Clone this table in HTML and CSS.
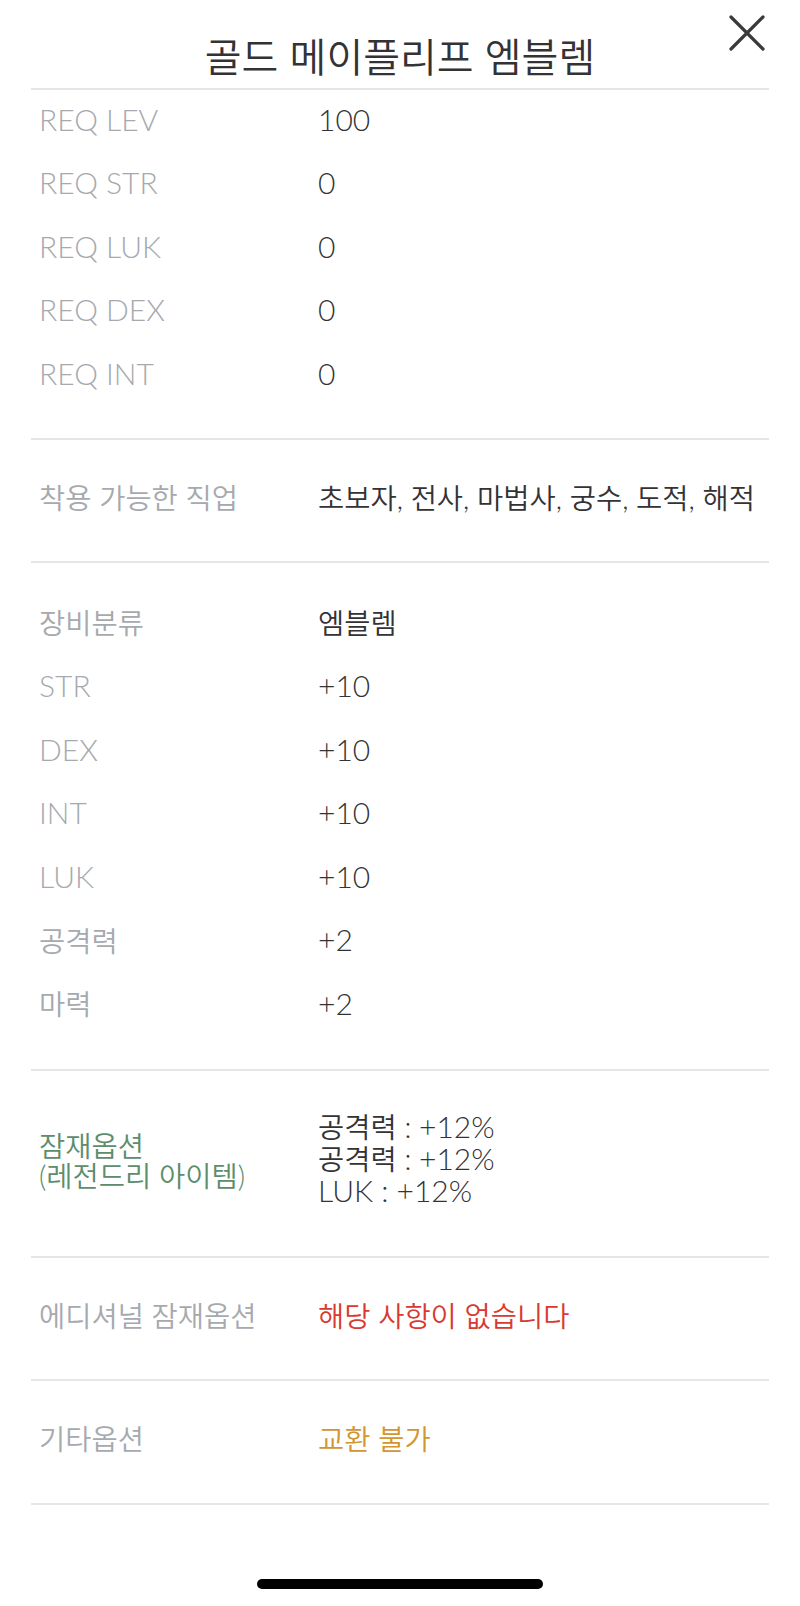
FILE: index.html
```html
<!DOCTYPE html>
<html lang="ko">
<head>
    <meta charset="UTF-8">
    <meta name="viewport" content="width=device-width, initial-scale=1.0">
    <title>골드 메이플리프 엠블렘</title>
    <link rel="stylesheet" href="styles.css">
</head>
<body>
    <div class="sheet">
        <header class="sheet-header">
            <h1 class="title">골드 메이플리프 엠블렘</h1>
            <button class="close-btn" aria-label="닫기">
                <svg width="36" height="36" viewBox="0 0 36 36">
                    <path d="M2 2 L34 34 M34 2 L2 34" stroke="#3a3a3c" stroke-width="3.2" stroke-linecap="round" fill="none"/>
                </svg>
            </button>
        </header>

        <section class="group group-first">
            <div class="row"><span class="label en">REQ LEV</span><span class="value en">100</span></div>
            <div class="row"><span class="label en">REQ STR</span><span class="value en">0</span></div>
            <div class="row"><span class="label en">REQ LUK</span><span class="value en">0</span></div>
            <div class="row"><span class="label en">REQ DEX</span><span class="value en">0</span></div>
            <div class="row"><span class="label en">REQ INT</span><span class="value en">0</span></div>
        </section>

        <section class="group">
            <div class="row"><span class="label">착용 가능한 직업</span><span class="value">초보자, 전사, 마법사, 궁수, 도적, 해적</span></div>
        </section>

        <section class="group group-stats">
            <div class="row"><span class="label">장비분류</span><span class="value">엠블렘</span></div>
            <div class="row"><span class="label en">STR</span><span class="value en">+10</span></div>
            <div class="row"><span class="label en">DEX</span><span class="value en">+10</span></div>
            <div class="row"><span class="label en">INT</span><span class="value en">+10</span></div>
            <div class="row"><span class="label en">LUK</span><span class="value en">+10</span></div>
            <div class="row"><span class="label">공격력</span><span class="value en">+2</span></div>
            <div class="row"><span class="label">마력</span><span class="value en">+2</span></div>
        </section>

        <section class="group group-potential">
            <div class="row row-multi">
                <div class="label legendary">
                    <div>잠재옵션</div>
                    <div>(레전드리 아이템)</div>
                </div>
                <div class="value">
                    <div>공격력 : <span class="en">+12%</span></div>
                    <div>공격력 : <span class="en">+12%</span></div>
                    <div class="en">LUK : +12%</div>
                </div>
            </div>
        </section>

        <section class="group">
            <div class="row"><span class="label">에디셔널 잠재옵션</span><span class="value none">해당 사항이 없습니다</span></div>
        </section>

        <section class="group">
            <div class="row"><span class="label">기타옵션</span><span class="value untradable">교환 불가</span></div>
        </section>

        <div class="home-area">
            <div class="home-bar"></div>
        </div>
    </div>
</body>
</html>
```

FILE: styles.css
```css
body {
    margin: 0;
    background: #fff;
    font-family: "Lato", "Noto Sans CJK KR", sans-serif;
    font-weight: 350;
    color: #3a3a3c;
}
.sheet {
    width: 800px;
    min-height: 1606px;
    box-sizing: border-box;
    padding: 0 31px;
    display: flex;
    flex-direction: column;
}
.sheet-header {
    position: relative;
    height: 90px;
    display: flex;
    justify-content: center;
    padding-top: 33px;
    box-sizing: border-box;
    border-bottom: 2px solid #e6e6e8;
}
.title {
    margin: 0;
    font-family: "Noto Sans CJK KR", sans-serif;
    font-weight: 350;
    font-size: 40px;
    line-height: 44px;
    color: #333336;
}
.close-btn {
    position: absolute;
    top: 15px;
    right: 4px;
    padding: 0;
    border: none;
    background: none;
    cursor: pointer;
}
.close-btn svg {
    display: block;
}
.group {
    padding: 25px 0 33px;
    border-bottom: 2px solid #e6e6e8;
}
.group-first {
    margin-top: -3px;
    padding-top: 0;
    padding-bottom: 33px;
}
.group-stats {
    padding: 27px 0 34px;
}
.group-potential {
    padding: 40px 0 50px;
}
.row {
    display: grid;
    grid-template-columns: 287px 1fr;
    align-items: center;
    height: 63.5px;
    font-size: 28.5px;
}
.row-multi {
    height: auto;
    line-height: 31px;
}
.row-multi .label {
    line-height: 30px;
    padding-top: 5px;
}
.en {
    font-size: 30px;
}
.label {
    padding-left: 8px;
    color: #a6a9ae;
}
.value {
    color: #333335;
}
.legendary {
    color: #5c8d6c;
}
.none {
    color: #d83a32;
}
.untradable {
    color: #d39530;
}
.home-area {
    flex: 1;
    display: flex;
    justify-content: center;
    align-items: flex-end;
    padding-bottom: 17px;
}
.home-bar {
    width: 286px;
    height: 10px;
    border-radius: 5px;
    background: #000;
}
```
